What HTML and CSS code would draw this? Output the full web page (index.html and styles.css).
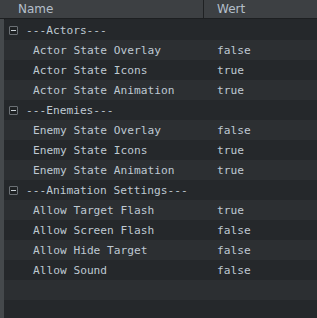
FILE: index.html
```html
<!DOCTYPE html>
<html lang="de">
<head>
    <meta charset="UTF-8">
    <link rel="stylesheet" href="styles.css">
</head>
<body>

    <div class="tree">
        <!-- Kopfzeile -->
        <div class="tree-header">
            <div class="col-name">Name</div>
            <div class="col-value">Wert</div>
        </div>

        <div class="tree-body">
            <div class="row group"><span class="toggle"></span><span class="name">---Actors---</span></div>
            <div class="row"><span class="name">Actor State Overlay</span><span class="value">false</span></div>
            <div class="row"><span class="name">Actor State Icons</span><span class="value">true</span></div>
            <div class="row"><span class="name">Actor State Animation</span><span class="value">true</span></div>

            <div class="row group"><span class="toggle"></span><span class="name">---Enemies---</span></div>
            <div class="row"><span class="name">Enemy State Overlay</span><span class="value">false</span></div>
            <div class="row"><span class="name">Enemy State Icons</span><span class="value">true</span></div>
            <div class="row"><span class="name">Enemy State Animation</span><span class="value">true</span></div>

            <div class="row group"><span class="toggle"></span><span class="name">---Animation Settings---</span></div>
            <div class="row"><span class="name">Allow Target Flash</span><span class="value">true</span></div>
            <div class="row"><span class="name">Allow Screen Flash</span><span class="value">false</span></div>
            <div class="row"><span class="name">Allow Hide Target</span><span class="value">false</span></div>
            <div class="row"><span class="name">Allow Sound</span><span class="value">false</span></div>

            <div class="row empty"></div>
            <div class="row empty"></div>
        </div>
    </div>

</body>
</html>
```

FILE: styles.css
```css
body {
    margin: 0;
    padding: 0;
    background-color: #25282b;
    overflow: hidden;
}

.tree {
    width: 317px;
    height: 318px;
    display: flex;
    flex-direction: column;
}

.tree-header {
    display: flex;
    height: 18px;
    background-color: #3d4043;
    border-bottom: 1px solid #1d1f21;
    font-family: "DejaVu Sans", sans-serif;
    font-size: 12px;
    color: #b4bfca;
}

.col-name {
    width: 204px;
    padding-left: 18px;
    box-sizing: border-box;
    border-right: 1px solid #1f2123;
    line-height: 18px;
}

.col-value {
    padding-left: 13px;
    line-height: 18px;
}

.tree-body {
    flex: 1;
    padding-top: 1px;
    border-left: 4px solid #45494c;
    box-shadow: inset 1px 0 0 #1e2022;
    font-family: "DejaVu Sans Mono", monospace;
    font-size: 11.2px;
    color: #bfc9d2;
}

.row {
    display: flex;
    align-items: center;
    height: 20px;
    background-color: #25282b;
}

.row:nth-child(even) {
    background-color: #2c2f32;
}

.row .name {
    width: 213px;
    padding-left: 29px;
    box-sizing: border-box;
    white-space: nowrap;
}

.row.group .name {
    padding-left: 8px;
}

.toggle {
    width: 9px;
    height: 9px;
    margin-left: 5px;
    box-sizing: border-box;
    border: 1px solid #6b7075;
    border-radius: 1px;
    background-color: #1f2224;
    position: relative;
}

.toggle::after {
    content: "";
    position: absolute;
    left: 1px;
    right: 1px;
    top: 3px;
    height: 1px;
    background-color: #c9d0d6;
}

.value {
    white-space: nowrap;
}
```
